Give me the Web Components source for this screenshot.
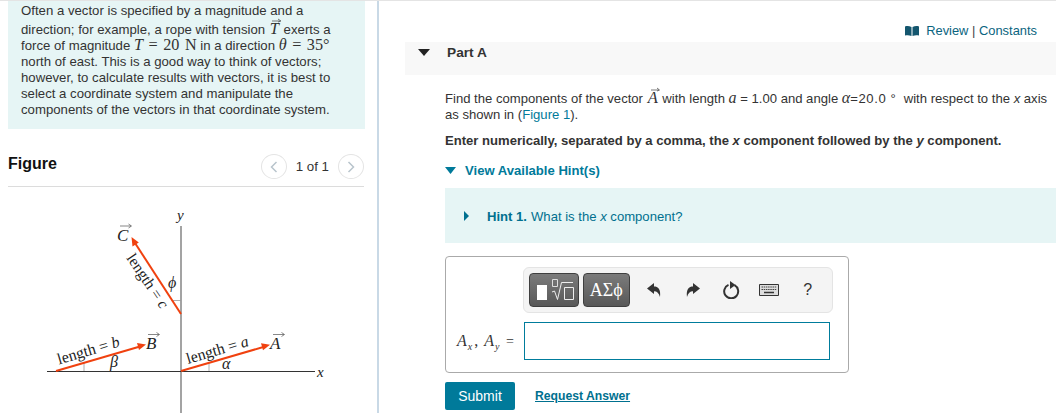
<!DOCTYPE html>
<html>
<head>
<meta charset="utf-8">
<title>Part A</title>
<style>
  html, body { margin: 0; height: 413px; overflow: hidden; background: #fff; }
  body { font-family: "Liberation Sans", Arial, sans-serif; font-size: 13px; color: #333; }
</style>
</head>
<body>
<mp-layout>
  <div slot="left">
    <mp-intro>Often a vector is specified by a magnitude and a<br>direction; for example, a rope with tension <mp-vec>T</mp-vec> exerts a<br>force of magnitude <span class="m"><i>T</i> = 20 N</span> in a direction <span class="m"><i>θ</i> = 35°</span><br>north of east. This is a good way to think of vectors;<br>however, to calculate results with vectors, it is best to<br>select a coordinate system and manipulate the<br>components of the vectors in that coordinate system.</mp-intro>
    <mp-figure-head></mp-figure-head>
    <mp-figure></mp-figure>
  </div>
  <div slot="right">
    <mp-review></mp-review>
    <mp-part-head>Part A</mp-part-head>
    <mp-question></mp-question>
    <mp-hint-toggle>View Available Hint(s)</mp-hint-toggle>
    <mp-hint></mp-hint>
    <mp-answer></mp-answer>
    <mp-actions></mp-actions>
  </div>
</mp-layout>

<script>
function define(name, html) {
  customElements.define(name, class extends HTMLElement {
    constructor() {
      super();
      this.attachShadow({ mode: 'open' }).innerHTML = html;
    }
  });
}

define('mp-layout', `
  <style>
    :host { display: flex; height: 413px; overflow: hidden; border-top: 1px solid #e4e4e4; box-sizing: border-box; }
    .left { width: 377px; flex: none; border-right: 2px solid #c9d9e6; overflow: hidden; }
    .right { flex: 1; min-width: 0; }
  </style>
  <div class="left"><slot name="left"></slot></div>
  <div class="right"><slot name="right"></slot></div>
`);

define('mp-vec', `
  <style>
    :host { display: inline-block; position: relative; margin: 3px 1px 0 1px; font: italic 16.500px "Liberation Serif", serif; line-height: 13px; }
    svg { position: absolute; left: 2px; top: -4px; }
  </style>
  <svg width="10" height="5" viewBox="0 0 10 5"><path d="M0 3h8M6 1l3 2-3 1" fill="none" stroke="#555" stroke-width=".8"/></svg>
  <slot></slot>
`);

define('mp-intro', `
  <style>
    :host { display: block; margin-left: 8px; width: 357px; height: 128px; box-sizing: border-box; padding: 2px 13px 0; background: #e6f5f5; color: #333; font-size: 13.200px; line-height: 16px; white-space: nowrap; }
    ::slotted(.m) { font-family: "Liberation Serif", serif; font-size: 16.200px; line-height: 0; word-spacing: 1.500px; }
  </style>
  <slot></slot>
`);

define('mp-figure-head', `
  <style>
    :host { display: flex; align-items: center; justify-content: space-between; margin: 0 13px 0 8px; height: 58px; padding-top: 12px; border-bottom: 1px solid #dcdcdc; box-sizing: border-box; }
    h3 { margin: 0; font-size: 16px; line-height: 18px; color: #111; font-weight: bold; }
    nav { display: flex; align-items: center; gap: 9px; margin-top: 6px; font-size: 13.300px; color: #333; }
    b { display: flex; align-items: center; justify-content: center; width: 26px; height: 25px; border: 1px solid #e4e4e4; border-radius: 50%; box-sizing: border-box; }
  </style>
  <h3>Figure</h3>
  <nav>
    <b><svg width="8" height="12" viewBox="0 0 8 12"><path d="M6.500 1L1.500 6l5 5" fill="none" stroke="#b8c4cc" stroke-width="1.500"/></svg></b>
    <span>1 of 1</span>
    <b><svg width="8" height="12" viewBox="0 0 8 12"><path d="M1.500 1l5 5-5 5" fill="none" stroke="#b8c4cc" stroke-width="1.500"/></svg></b>
  </nav>
`);

define('mp-figure', `
  <style>
    :host { display: block; height: 226px; }
    svg { display: block; }
    text { font-family: "Liberation Serif", serif; fill: #222; }
    .i { font-style: italic; }
  </style>
  <svg width="377" height="226" viewBox="0 187 377 226">
    <text transform="translate(126 258) rotate(56)" font-size="15.600">length = <tspan class="i">c</tspan></text>
    <rect x="150" y="311" width="25" height="8" fill="#fff"/>
    <path d="M181 226V413" stroke="#8c8c8c" stroke-width="1.600"/>
    <path d="M47 371.500H315" stroke="#333" stroke-width="1.200"/>
    <path d="M84 371v-8M209 371v-8M181 300.500h-8" stroke="#999" stroke-width=".8" fill="none"/>
    <path d="M56 371L140 346.500" stroke="#f0410f" stroke-width="2"/>
    <path d="M146 344.500l-9 -1.600 2 7z" fill="#f0410f"/>
    <path d="M181 371L265 346.500" stroke="#f0410f" stroke-width="2"/>
    <path d="M270 344.800l-9 -1.600 2 7z" fill="#f0410f"/>
    <path d="M181 314L135 243" stroke="#f0410f" stroke-width="2"/>
    <path d="M131.500 237l1 9.500 6.300-4z" fill="#f0410f"/>
    <text x="177" y="220" class="i" font-size="15">y</text>
    <text x="317" y="377" class="i" font-size="15">x</text>
    <text x="117" y="241" class="i" font-size="17">C</text>
    <path d="M120 226h11M128.500 224l3 2-3 2" stroke="#555" stroke-width=".7" fill="none"/>
    <text x="146" y="349" class="i" font-size="17">B</text>
    <path d="M148 334.500h11M156.500 332.500l3 2-3 2" stroke="#555" stroke-width=".7" fill="none"/>
    <text x="270" y="349" class="i" font-size="17">A</text>
    <path d="M273 334.500h11M281.500 332.500l3 2-3 2" stroke="#555" stroke-width=".7" fill="none"/>
    <text transform="translate(59 364.500) rotate(-16.500)" font-size="15.800">length = <tspan class="i">b</tspan></text>
    <text transform="translate(188 364) rotate(-16.500)" font-size="15.800">length = <tspan class="i">a</tspan></text>
    <text x="110" y="367" class="i" font-size="16">β</text>
    <text x="222" y="369" class="i" font-size="16">α</text>
    <text x="168" y="288" class="i" font-size="16">ϕ</text>
  </svg>
`);

define('mp-review', `
  <style>
    :host { display: flex; justify-content: flex-end; align-items: center; height: 41px; padding: 19px 19px 0 0; box-sizing: border-box; font-size: 12.900px; color: #0a6480; line-height: 22px; }
    svg { margin-right: 7px; }
    i { font-style: normal; color: #444; }
  </style>
  <svg width="14" height="10" viewBox="0 0 14 10"><path d="M0 0.500c2-.6 4-.6 6.500.4V10c-2.500-1-4.500-1-6.500-.4zM7.500.9c2.500-1 4.500-1 6.500-.4v9.100c-2-.6-4-.6-6.500.4z" fill="#14566e"/></svg>
  <span>Review <i>|</i> Constants</span>
`);

define('mp-part-head', `
  <style>
    :host { display: flex; margin-left: 26px; height: 33px; padding-top: 1px; background: #f8f8f8; font-size: 13.700px; font-weight: bold; color: #333; line-height: 20px; box-sizing: border-box; }
    svg { margin: 6px 17px 0 13px; flex: none; }
  </style>
  <svg width="12" height="7" viewBox="0 0 12 7"><path d="M0 0h12L6 7z" fill="#222"/></svg>
  <span><slot></slot></span>
`);

define('mp-question', `
  <style>
    :host { display: block; margin: 0 0 0 66px; padding-top: 16px; font-size: 13.100px; line-height: 16px; color: #333; white-space: nowrap; }
    p { margin: 0; }
    .m { font-family: "Liberation Serif", serif; font-style: italic; font-size: 16px; line-height: 0; }
    .v { position: relative; display: inline-block; font-family: "Liberation Serif", serif; font-style: italic; font-size: 16.500px; line-height: 13px; margin: 0 1px; }
    .v svg { position: absolute; left: 3px; top: -4px; }
    .n { letter-spacing: .6px; }
    a { color: #007a9a; }
    .e { margin-top: 10px; font-weight: bold; font-size: 13.090px; }
  </style>
  <p>Find the components of the vector <span class="v"><svg width="9" height="5" viewBox="0 0 9 5"><path d="M0 3h8M6 1l2.500 2-2.500 1" fill="none" stroke="#555" stroke-width=".8"/></svg>A</span> with length <span class="m">a</span> = 1.00 and angle <span class="m">α</span><span class="n">=20.0 °</span> &nbsp;with respect to the <i>x</i> axis<br>as shown in (<a>Figure 1</a>).</p>
  <p class="e">Enter numerically, separated by a comma, the <i>x</i> component followed by the <i>y</i> component.</p>
`);

define('mp-hint-toggle', `
  <style>
    :host { display: flex; align-items: center; margin: 12px 0 0 66px; height: 18px; font-size: 13.100px; font-weight: bold; color: #007a9a; }
    svg { margin-right: 9px; }
  </style>
  <svg width="11" height="7" viewBox="0 0 11 7"><path d="M0 0h11L5.500 7z" fill="#007a9a"/></svg>
  <span><slot></slot></span>
`);

define('mp-hint', `
  <style>
    :host { display: flex; align-items: center; margin: 9px 0 0 66px; height: 55px; background: #e6f5f5; padding: 1px 0 0 19px; box-sizing: border-box; color: #00708f; font-size: 13.100px; }
    svg { margin-right: 18px; }
    b { margin-right: 4px; }
  </style>
  <svg width="5" height="10" viewBox="0 0 5 10"><path d="M0 0l5 5-5 5z" fill="#00708f"/></svg>
  <b>Hint 1.</b><span>What is the <i>x</i> component?</span>
`);

define('mp-toolbar', `
  <style>
    :host { display: flex; align-items: center; width: 310px; height: 46px; box-sizing: border-box; border: 1px solid #e4e4e4; border-radius: 6px; background: #f4f4f4; padding: 0 5px; }
    .b { display: flex; align-items: center; justify-content: center; width: 50px; height: 34px; box-sizing: border-box; border: 1px solid #3f3f3f; border-radius: 4px; background: linear-gradient(#7b7b7b, #585858); color: #fff; margin-right: 4px; font: 18px "Liberation Serif", serif; }
    .tools { display: grid; grid-template-columns: repeat(5, 38.400px); justify-items: center; align-items: center; margin-left: 1.500px; color: #333; font-size: 16px; }
    svg { display: block; }
  </style>
  <div class="b"><svg width="48" height="32" viewBox="0 0 48 32">
    <path d="M7 11h10v15H7z" fill="#fff"/>
    <path d="M22.500 5.500h5v7h-5z" fill="none" stroke="#ddd"/>
    <path d="M22 18l2.500-1 3 8.500L31.500 8.500H43" fill="none" stroke="#eee" stroke-width="1"/>
    <path d="M34.500 13.500h9v12h-9z" fill="none" stroke="#eee"/>
  </svg></div>
  <div class="b">ΑΣϕ</div>
  <div class="tools">
    <svg width="14" height="14" viewBox="0 0 14 14"><path d="M0 5.500L7 0v3.500c4 0 7 2.500 6 10.500-1-4-3-5.800-6-5.800V11z" fill="#333"/></svg>
    <svg width="14" height="14" viewBox="0 0 14 14"><path d="M14 5.500L7 0v3.500c-4 0-7 2.500-6 10.500 1-4 3-5.800 6-5.800V11z" fill="#333"/></svg>
    <svg width="17" height="18" viewBox="0 0 17 18"><path d="M11.500 4.200A7 7 0 1 1 5.500 3.900" fill="none" stroke="#333" stroke-width="2"/><path d="M7 0l5.500 4L7 8z" fill="#333"/></svg>
    <svg width="20" height="12" viewBox="0 0 20 12"><path d="M.5.500h19v11H.5z" fill="#ddd" stroke="#333"/><path d="M2.500 3h15M2.500 5.500h15" stroke="#444" stroke-dasharray="1.500 .7"/><path d="M5 8.500h10" stroke="#333" stroke-width="1.500"/></svg>
    <span>?</span>
  </div>
`);

define('mp-answer', `
  <style>
    :host { display: block; margin: 13px 0 0 66px; width: 404px; height: 117px; box-sizing: border-box; border: 1px solid #aaa; border-radius: 4px; padding: 10px 0 0 77px; }
    .row { display: flex; align-items: center; margin-top: 9px; }
    .l { width: 66px; margin-left: -66px; white-space: nowrap; font: 16px "Liberation Serif", serif; color: #333; }
    i { font-style: italic; }
    sub { font-size: 10px; font-style: italic; line-height: 0; padding-left: 1px; }
    .c { margin: 0 2px 0 2px; }
    .eq { font-size: 14px; margin-left: 3px; }
    input { display: block; width: 306px; height: 38px; box-sizing: border-box; border: 1px solid #007c9c; outline: 0; margin: 0 0 0 1px; padding: 0 6px; background: #fff; }
  </style>
  <mp-toolbar></mp-toolbar>
  <div class="row">
    <span class="l"><i>A<sub>x</sub></i><span class="c">,</span> <i>A<sub>y</sub></i><span class="eq"> =</span></span>
    <input type="text" aria-label="answer">
  </div>
`);

define('mp-actions', `
  <style>
    :host { display: flex; align-items: center; gap: 20px; margin: 9px 0 0 66px; height: 28px; }
    button { width: 70px; height: 28px; border: 0; border-radius: 2px; background: #007a9a; color: #fff; font: 14px "Liberation Sans", Arial, sans-serif; padding: 0; }
    a { font-size: 12.200px; font-weight: bold; color: #00708f; text-decoration: underline; }
  </style>
  <button>Submit</button>
  <a>Request Answer</a>
`);
</script>
</body>
</html>
